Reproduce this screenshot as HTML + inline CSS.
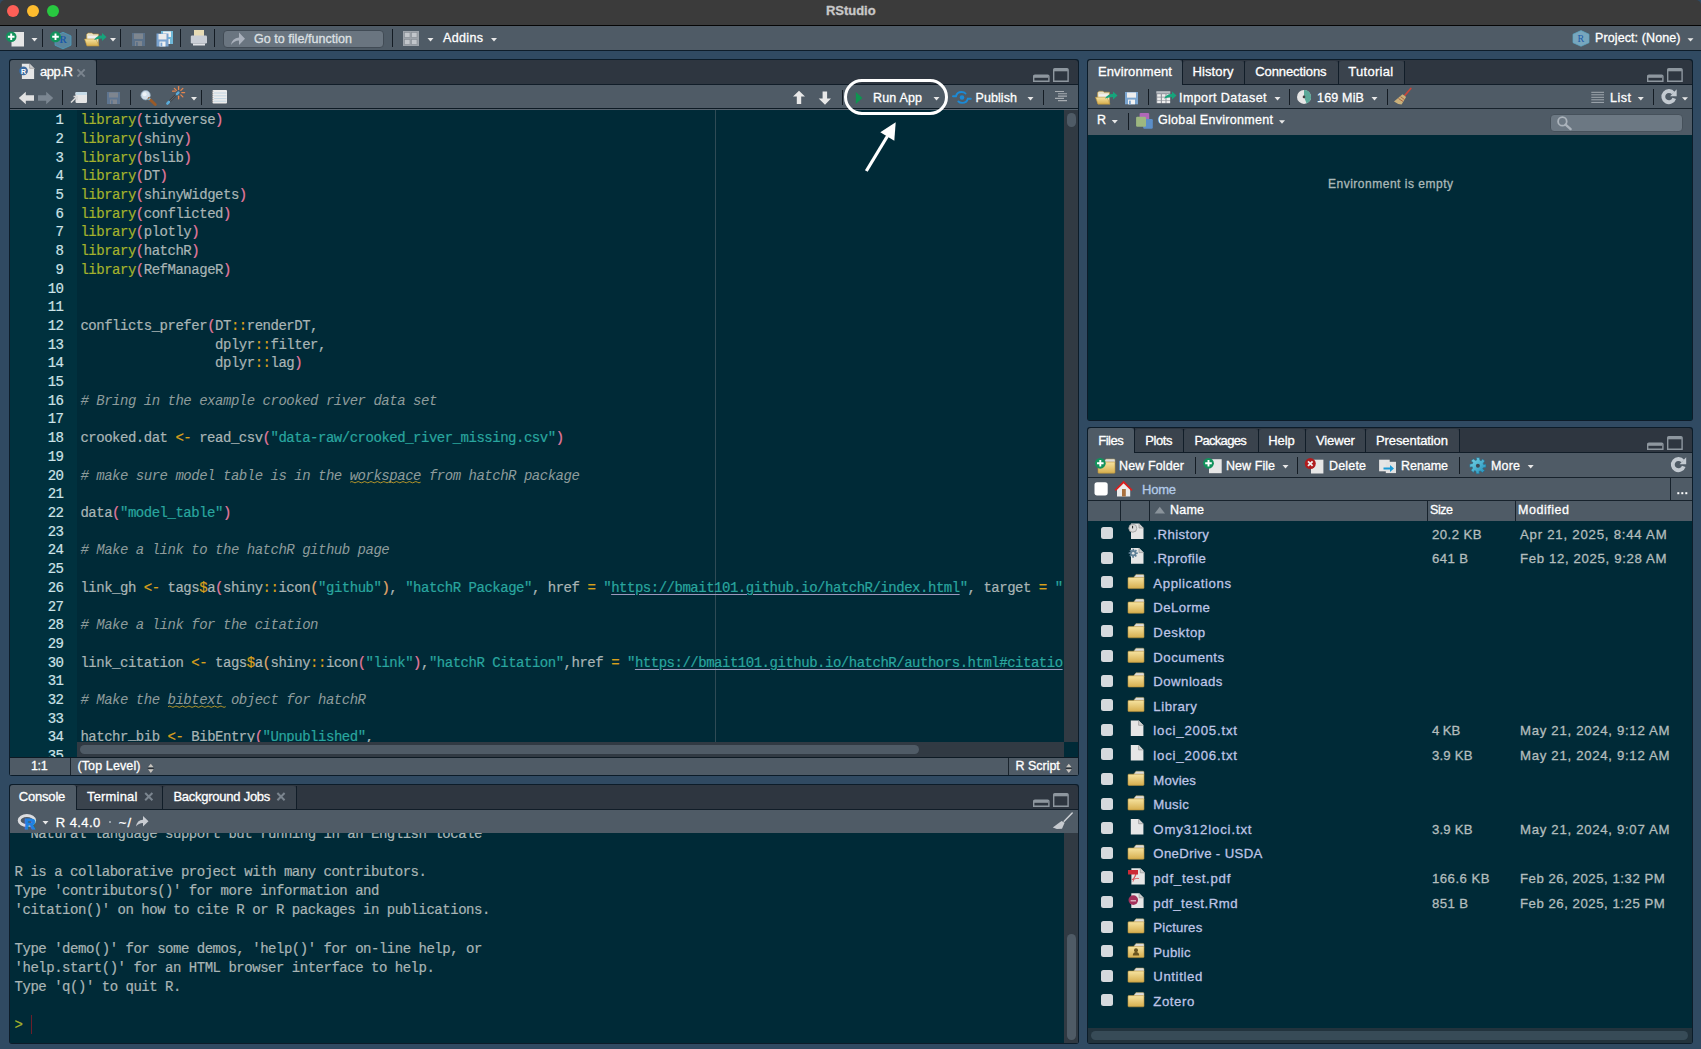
<!DOCTYPE html>
<html><head><meta charset="utf-8"><title>RStudio</title><style>*{box-sizing:border-box;margin:0;padding:0}
html,body{width:1701px;height:1049px;overflow:hidden}
body{background:#304a62;position:relative;font-family:"Liberation Sans",sans-serif}
.a{position:absolute}
.t{white-space:pre;-webkit-text-stroke:0.3px currentColor}
.cl{font-family:"Liberation Mono",monospace;font-size:14.0px;line-height:14.0px;letter-spacing:-0.481px;white-space:pre;color:#a9b5b5;-webkit-text-stroke:0.2px currentColor}
.ul{text-decoration:underline;text-decoration-color:#9c98bd;text-underline-offset:2px}
.sq{text-decoration:underline wavy #c9a227;text-decoration-thickness:1px;text-underline-offset:2px}
</style></head><body>
<div class="a" style="left:0px;top:0px;width:1701px;height:25px;background:#3b3b3b;border-radius:5px 5px 0 0"></div>
<div class="a" style="left:0px;top:25px;width:1701px;height:1px;background:#050505;"></div>
<div class="a" style="left:6.8px;top:4.7px;width:12.4px;height:12.4px;border-radius:50%;background:#fe5f57"></div>
<div class="a" style="left:26.8px;top:4.7px;width:12.4px;height:12.4px;border-radius:50%;background:#febc2e"></div>
<div class="a" style="left:46.8px;top:4.7px;width:12.4px;height:12.4px;border-radius:50%;background:#28c840"></div>
<div class="a t" style="left:826.00px;top:3.99px;font-size:13px;line-height:13px;color:#c8c8c8;font-family:'Liberation Sans',sans-serif;font-weight:700;letter-spacing:-0.033px;">RStudio</div>
<div class="a" style="left:0px;top:26px;width:1701px;height:24px;background:#4f5b66;"></div>
<div class="a" style="left:0px;top:50px;width:1701px;height:1px;background:#0e1d2a;"></div>
<!--ICONS_MAIN-->
<div class="a" style="left:222.5px;top:29.5px;width:161px;height:18.5px;background:#6a7580;border:1px solid #414b55;border-radius:4px;box-sizing:border-box"></div>
<div class="a t" style="left:254.00px;top:33.02px;font-size:12.5px;line-height:12.5px;color:#dde0e3;font-family:'Liberation Sans',sans-serif;letter-spacing:0.039px;">Go to file/function</div>
<div class="a t" style="left:443.00px;top:32.22px;font-size:12.5px;line-height:12.5px;color:#ffffff;font-family:'Liberation Sans',sans-serif;letter-spacing:0.360px;">Addins</div>
<div class="a t" style="left:1595.00px;top:32.42px;font-size:12.5px;line-height:12.5px;color:#ffffff;font-family:'Liberation Sans',sans-serif;letter-spacing:0.100px;">Project: (None)</div>
<div class="a" style="left:42px;top:29px;width:1px;height:18px;background:#141c24;"></div>
<div class="a" style="left:76px;top:29px;width:1px;height:18px;background:#141c24;"></div>
<div class="a" style="left:120px;top:29px;width:1px;height:18px;background:#141c24;"></div>
<div class="a" style="left:180px;top:29px;width:1px;height:18px;background:#141c24;"></div>
<div class="a" style="left:214px;top:29px;width:1px;height:18px;background:#141c24;"></div>
<div class="a" style="left:392px;top:29px;width:1px;height:18px;background:#141c24;"></div>
<div class="a" style="left:9px;top:59px;width:1070px;height:717px;background:#0c1c29;border-radius:3px"></div>
<div class="a" style="left:9px;top:784px;width:1070px;height:260px;background:#0c1c29;border-radius:3px"></div>
<div class="a" style="left:1087px;top:59px;width:606px;height:362px;background:#0c1c29;border-radius:3px"></div>
<div class="a" style="left:1087px;top:427px;width:606px;height:617px;background:#0c1c29;border-radius:3px"></div>
<div class="a" style="left:10px;top:60px;width:1068px;height:24px;background:#2e3640;border-radius:3px 3px 0 0"></div>
<div class="a" style="left:10px;top:60px;width:86px;height:25px;background:#4f5b66;border-radius:3px 3px 0 0"></div>
<div class="a" style="left:96px;top:60px;width:1px;height:24px;background:#111d28;"></div>
<div class="a" style="left:10px;top:84px;width:86px;height:0px;background:#4f5b66;"></div>
<div class="a" style="left:96px;top:84px;width:982px;height:1px;background:#111d28;"></div>
<div class="a" style="left:10px;top:85px;width:1068px;height:23px;background:#4f5b66;"></div>
<div class="a" style="left:10px;top:108px;width:1068px;height:1px;background:#0d1a24;"></div>
<div class="a" style="left:10px;top:109px;width:1068px;height:1px;background:#56626d;"></div>
<div class="a t" style="left:40.00px;top:65.19px;font-size:13px;line-height:13px;color:#ffffff;font-family:'Liberation Sans',sans-serif;letter-spacing:-0.425px;">app.R</div>
<div class="a t" style="left:873.00px;top:91.72px;font-size:12.5px;line-height:12.5px;color:#ffffff;font-family:'Liberation Sans',sans-serif;letter-spacing:0.167px;">Run App</div>
<div class="a t" style="left:975.50px;top:91.72px;font-size:12.5px;line-height:12.5px;color:#ffffff;font-family:'Liberation Sans',sans-serif;letter-spacing:0.083px;">Publish</div>
<div class="a" style="left:62px;top:90px;width:1px;height:15px;background:#141c24;"></div>
<div class="a" style="left:96px;top:90px;width:1px;height:15px;background:#141c24;"></div>
<div class="a" style="left:130px;top:90px;width:1px;height:15px;background:#141c24;"></div>
<div class="a" style="left:201px;top:90px;width:1px;height:15px;background:#141c24;"></div>
<div class="a" style="left:842px;top:90px;width:1px;height:15px;background:#141c24;"></div>
<div class="a" style="left:1043px;top:90px;width:1px;height:15px;background:#141c24;"></div>
<div class="a" style="left:10px;top:110px;width:1054px;height:648px;background:#002a37;"></div>
<div class="a" style="left:10px;top:110px;width:67px;height:648px;background:#00313e;"></div>
<div class="a" style="left:1064px;top:110px;width:14px;height:648px;background:#313a43;"></div>
<div class="a" style="left:1067px;top:113px;width:9px;height:14px;border-radius:5px;background:#4f5b66"></div>
<div class="a" style="left:10px;top:110px;width:67px;height:647px;overflow:hidden"><div class="a cl" style="top:3.17px;right:13.5px;color:#cde3e8;text-align:right">1</div><div class="a cl" style="top:21.88px;right:13.5px;color:#cde3e8;text-align:right">2</div><div class="a cl" style="top:40.59px;right:13.5px;color:#cde3e8;text-align:right">3</div><div class="a cl" style="top:59.29px;right:13.5px;color:#cde3e8;text-align:right">4</div><div class="a cl" style="top:78.00px;right:13.5px;color:#cde3e8;text-align:right">5</div><div class="a cl" style="top:96.70px;right:13.5px;color:#cde3e8;text-align:right">6</div><div class="a cl" style="top:115.41px;right:13.5px;color:#cde3e8;text-align:right">7</div><div class="a cl" style="top:134.12px;right:13.5px;color:#cde3e8;text-align:right">8</div><div class="a cl" style="top:152.82px;right:13.5px;color:#cde3e8;text-align:right">9</div><div class="a cl" style="top:171.53px;right:13.5px;color:#cde3e8;text-align:right">10</div><div class="a cl" style="top:190.23px;right:13.5px;color:#cde3e8;text-align:right">11</div><div class="a cl" style="top:208.94px;right:13.5px;color:#cde3e8;text-align:right">12</div><div class="a cl" style="top:227.65px;right:13.5px;color:#cde3e8;text-align:right">13</div><div class="a cl" style="top:246.35px;right:13.5px;color:#cde3e8;text-align:right">14</div><div class="a cl" style="top:265.06px;right:13.5px;color:#cde3e8;text-align:right">15</div><div class="a cl" style="top:283.76px;right:13.5px;color:#cde3e8;text-align:right">16</div><div class="a cl" style="top:302.47px;right:13.5px;color:#cde3e8;text-align:right">17</div><div class="a cl" style="top:321.18px;right:13.5px;color:#cde3e8;text-align:right">18</div><div class="a cl" style="top:339.88px;right:13.5px;color:#cde3e8;text-align:right">19</div><div class="a cl" style="top:358.59px;right:13.5px;color:#cde3e8;text-align:right">20</div><div class="a cl" style="top:377.29px;right:13.5px;color:#cde3e8;text-align:right">21</div><div class="a cl" style="top:396.00px;right:13.5px;color:#cde3e8;text-align:right">22</div><div class="a cl" style="top:414.71px;right:13.5px;color:#cde3e8;text-align:right">23</div><div class="a cl" style="top:433.41px;right:13.5px;color:#cde3e8;text-align:right">24</div><div class="a cl" style="top:452.12px;right:13.5px;color:#cde3e8;text-align:right">25</div><div class="a cl" style="top:470.82px;right:13.5px;color:#cde3e8;text-align:right">26</div><div class="a cl" style="top:489.53px;right:13.5px;color:#cde3e8;text-align:right">27</div><div class="a cl" style="top:508.24px;right:13.5px;color:#cde3e8;text-align:right">28</div><div class="a cl" style="top:526.94px;right:13.5px;color:#cde3e8;text-align:right">29</div><div class="a cl" style="top:545.65px;right:13.5px;color:#cde3e8;text-align:right">30</div><div class="a cl" style="top:564.35px;right:13.5px;color:#cde3e8;text-align:right">31</div><div class="a cl" style="top:583.06px;right:13.5px;color:#cde3e8;text-align:right">32</div><div class="a cl" style="top:601.77px;right:13.5px;color:#cde3e8;text-align:right">33</div><div class="a cl" style="top:620.47px;right:13.5px;color:#cde3e8;text-align:right">34</div><div class="a cl" style="top:639.18px;right:13.5px;color:#cde3e8;text-align:right">35</div></div><div class="a" style="left:77px;top:110px;width:987px;height:632px;overflow:hidden"><div class="a" style="left:638px;top:0px;width:1px;height:632px;background:#2f4b55"></div><div class="a cl" style="top:3.17px;left:3.40px"><span style="color:#a4b22c;">library</span><span style="color:#e67a9f;">(</span>tidyverse<span style="color:#e67a9f;">)</span></div><div class="a cl" style="top:21.88px;left:3.40px"><span style="color:#a4b22c;">library</span><span style="color:#e67a9f;">(</span>shiny<span style="color:#e67a9f;">)</span></div><div class="a cl" style="top:40.59px;left:3.40px"><span style="color:#a4b22c;">library</span><span style="color:#e67a9f;">(</span>bslib<span style="color:#e67a9f;">)</span></div><div class="a cl" style="top:59.29px;left:3.40px"><span style="color:#a4b22c;">library</span><span style="color:#e67a9f;">(</span>DT<span style="color:#e67a9f;">)</span></div><div class="a cl" style="top:78.00px;left:3.40px"><span style="color:#a4b22c;">library</span><span style="color:#e67a9f;">(</span>shinyWidgets<span style="color:#e67a9f;">)</span></div><div class="a cl" style="top:96.70px;left:3.40px"><span style="color:#a4b22c;">library</span><span style="color:#e67a9f;">(</span>conflicted<span style="color:#e67a9f;">)</span></div><div class="a cl" style="top:115.41px;left:3.40px"><span style="color:#a4b22c;">library</span><span style="color:#e67a9f;">(</span>plotly<span style="color:#e67a9f;">)</span></div><div class="a cl" style="top:134.12px;left:3.40px"><span style="color:#a4b22c;">library</span><span style="color:#e67a9f;">(</span>hatchR<span style="color:#e67a9f;">)</span></div><div class="a cl" style="top:152.82px;left:3.40px"><span style="color:#a4b22c;">library</span><span style="color:#e67a9f;">(</span>RefManageR<span style="color:#e67a9f;">)</span></div><div class="a cl" style="top:171.53px;left:3.40px"></div><div class="a cl" style="top:190.23px;left:3.40px"></div><div class="a cl" style="top:208.94px;left:3.40px">conflicts_prefer<span style="color:#e67a9f;">(</span>DT<span style="color:#d8a01c;">::</span>renderDT,</div><div class="a cl" style="top:227.65px;left:3.40px">                 dplyr<span style="color:#d8a01c;">::</span>filter,</div><div class="a cl" style="top:246.35px;left:3.40px">                 dplyr<span style="color:#d8a01c;">::</span>lag<span style="color:#e67a9f;">)</span></div><div class="a cl" style="top:265.06px;left:3.40px"></div><div class="a cl" style="top:283.76px;left:3.40px"><span style="color:#8e9c9c;font-style:italic;-webkit-text-stroke:0"># Bring in the example crooked river data set</span></div><div class="a cl" style="top:302.47px;left:3.40px"></div><div class="a cl" style="top:321.18px;left:3.40px">crooked.dat <span style="color:#d8a01c;">&lt;-</span> read_csv<span style="color:#e67a9f;">(</span><span style="color:#29a69f;">&quot;data-raw/crooked_river_missing.csv&quot;</span><span style="color:#e67a9f;">)</span></div><div class="a cl" style="top:339.88px;left:3.40px"></div><div class="a cl" style="top:358.59px;left:3.40px"><span style="color:#8e9c9c;font-style:italic;-webkit-text-stroke:0"># make sure model table is in the workspace from hatchR package</span></div><div class="a cl" style="top:377.29px;left:3.40px"></div><div class="a cl" style="top:396.00px;left:3.40px">data<span style="color:#e67a9f;">(</span><span style="color:#29a69f;">&quot;model_table&quot;</span><span style="color:#e67a9f;">)</span></div><div class="a cl" style="top:414.71px;left:3.40px"></div><div class="a cl" style="top:433.41px;left:3.40px"><span style="color:#8e9c9c;font-style:italic;-webkit-text-stroke:0"># Make a link to the hatchR github page</span></div><div class="a cl" style="top:452.12px;left:3.40px"></div><div class="a cl" style="top:470.82px;left:3.40px">link_gh <span style="color:#d8a01c;">&lt;-</span> tags<span style="color:#d8a01c;">$</span>a<span style="color:#e67a9f;">(</span>shiny<span style="color:#d8a01c;">::</span>icon<span style="color:#e3a76a;">(</span><span style="color:#29a69f;">&quot;github&quot;</span><span style="color:#e3a76a;">)</span>, <span style="color:#29a69f;">&quot;hatchR Package&quot;</span>, href <span style="color:#d8a01c;">=</span> <span style="color:#29a69f;">&quot;</span><span style="color:#29a69f" class="ul">https://bmait101.github.io/hatchR/index.html</span><span style="color:#29a69f;">&quot;</span>, target <span style="color:#d8a01c;">=</span> <span style="color:#29a69f;">&quot;</span></div><div class="a cl" style="top:489.53px;left:3.40px"></div><div class="a cl" style="top:508.24px;left:3.40px"><span style="color:#8e9c9c;font-style:italic;-webkit-text-stroke:0"># Make a link for the citation</span></div><div class="a cl" style="top:526.94px;left:3.40px"></div><div class="a cl" style="top:545.65px;left:3.40px">link_citation <span style="color:#d8a01c;">&lt;-</span> tags<span style="color:#d8a01c;">$</span>a<span style="color:#e3a76a;">(</span>shiny<span style="color:#d8a01c;">::</span>icon<span style="color:#e67a9f;">(</span><span style="color:#29a69f;">&quot;link&quot;</span><span style="color:#e67a9f;">)</span>,<span style="color:#29a69f;">&quot;hatchR Citation&quot;</span>,href <span style="color:#d8a01c;">=</span> <span style="color:#29a69f;">&quot;</span><span style="color:#29a69f" class="ul">https://bmait101.github.io/hatchR/authors.html#citatio</span></div><div class="a cl" style="top:564.35px;left:3.40px"></div><div class="a cl" style="top:583.06px;left:3.40px"><span style="color:#8e9c9c;font-style:italic;-webkit-text-stroke:0"># Make the bibtext object for hatchR</span></div><div class="a cl" style="top:601.77px;left:3.40px"></div><div class="a cl" style="top:620.47px;left:3.40px">hatchr<span style="position:relative;top:-2px">_</span>bib <span style="color:#d8a01c;">&lt;-</span> BibEntry<span style="color:#e67a9f;">(</span><span style="color:#29a69f;">&quot;Unpublished&quot;</span>,</div><div class="a cl" style="top:639.18px;left:3.40px"></div></div>
<div class="a" style="left:77px;top:742px;width:987px;height:15px;background:#313a43;"></div>
<div class="a" style="left:80px;top:745px;width:839px;height:9px;border-radius:5px;background:#4f5b66"></div>
<div class="a" style="left:1064px;top:742px;width:14px;height:15px;background:#002a37;"></div>
<div class="a" style="left:10px;top:757px;width:1068px;height:1px;background:#0d1a24;"></div>
<div class="a" style="left:10px;top:758px;width:1068px;height:17px;background:#4f5b66;"></div>
<div class="a" style="left:70px;top:758px;width:1px;height:17px;background:#1a242d;"></div>
<div class="a" style="left:1008px;top:758px;width:1px;height:17px;background:#1a242d;"></div>
<div class="a t" style="left:30.90px;top:760.22px;font-size:12.5px;line-height:12.5px;color:#ffffff;font-family:'Liberation Sans',sans-serif;letter-spacing:-0.250px;">1:1</div>
<div class="a t" style="left:77.40px;top:760.22px;font-size:12.5px;line-height:12.5px;color:#ffffff;font-family:'Liberation Sans',sans-serif;letter-spacing:0.130px;">(Top Level)</div>
<div class="a t" style="left:1015.60px;top:760.42px;font-size:12.5px;line-height:12.5px;color:#ffffff;font-family:'Liberation Sans',sans-serif;letter-spacing:-0.029px;">R Script</div>
<div class="a" style="left:10px;top:785px;width:1068px;height:24px;background:#2e3640;border-radius:3px 3px 0 0"></div>
<div class="a" style="left:10px;top:785px;width:66px;height:25px;background:#4f5b66;border-radius:3px 3px 0 0"></div>
<div class="a" style="left:77px;top:786px;width:85px;height:23px;background:#3a434d;border-radius:3px 3px 0 0"></div>
<div class="a" style="left:163px;top:786px;width:133px;height:23px;background:#3a434d;border-radius:3px 3px 0 0"></div>
<div class="a" style="left:76px;top:786px;width:1px;height:24px;background:#111d28;"></div>
<div class="a" style="left:162px;top:786px;width:1px;height:23px;background:#111d28;"></div>
<div class="a" style="left:296px;top:786px;width:1px;height:23px;background:#111d28;"></div>
<div class="a" style="left:76px;top:809px;width:1002px;height:1px;background:#111d28;"></div>
<div class="a" style="left:10px;top:810px;width:1068px;height:23px;background:#4f5b66;"></div>
<div class="a" style="left:10px;top:833px;width:1054px;height:210px;background:#002a37;"></div>
<div class="a" style="left:1064px;top:833px;width:14px;height:210px;background:#313a43;"></div>
<div class="a" style="left:1066.5px;top:933.5px;width:9.5px;height:106.5px;border-radius:5px;background:#4f5b66"></div>
<div class="a t" style="left:18.80px;top:790.19px;font-size:13px;line-height:13px;color:#ffffff;font-family:'Liberation Sans',sans-serif;letter-spacing:-0.200px;">Console</div>
<div class="a t" style="left:87.00px;top:790.19px;font-size:13px;line-height:13px;color:#ffffff;font-family:'Liberation Sans',sans-serif;letter-spacing:0.171px;">Terminal</div>
<div class="a t" style="left:173.40px;top:790.19px;font-size:13px;line-height:13px;color:#ffffff;font-family:'Liberation Sans',sans-serif;letter-spacing:-0.250px;">Background Jobs</div>
<div class="a t" style="left:55.80px;top:815.69px;font-size:13px;line-height:13px;color:#ffffff;font-family:'Liberation Sans',sans-serif;letter-spacing:0.417px;">R 4.4.0</div>
<div class="a t" style="left:118.80px;top:815.69px;font-size:13px;line-height:13px;color:#ffffff;font-family:'Liberation Sans',sans-serif;letter-spacing:1.000px;">~/</div>
<div class="a" style="left:108.5px;top:821px;width:2px;height:2px;background:#9aa4ad"></div>
<div class="a" style="left:10px;top:833px;width:1054px;height:210px;overflow:hidden"><div class="a cl" style="left:4.60px;top:-6.33px;color:#a9b5b5">  Natural language support but running in an English locale</div><div class="a cl" style="left:4.60px;top:12.82px;color:#a9b5b5"></div><div class="a cl" style="left:4.60px;top:31.97px;color:#a9b5b5">R is a collaborative project with many contributors.</div><div class="a cl" style="left:4.60px;top:51.12px;color:#a9b5b5">Type &#x27;contributors()&#x27; for more information and</div><div class="a cl" style="left:4.60px;top:70.27px;color:#a9b5b5">&#x27;citation()&#x27; on how to cite R or R packages in publications.</div><div class="a cl" style="left:4.60px;top:89.42px;color:#a9b5b5"></div><div class="a cl" style="left:4.60px;top:108.57px;color:#a9b5b5">Type &#x27;demo()&#x27; for some demos, &#x27;help()&#x27; for on-line help, or</div><div class="a cl" style="left:4.60px;top:127.72px;color:#a9b5b5">&#x27;help.start()&#x27; for an HTML browser interface to help.</div><div class="a cl" style="left:4.60px;top:146.87px;color:#a9b5b5">Type &#x27;q()&#x27; to quit R.</div><div class="a cl" style="left:4.60px;top:166.02px;color:#a9b5b5"></div><div class="a cl" style="left:4.60px;top:185.17px;color:#a4b22c">&gt;</div><div class="a" style="left:20.5px;top:182px;width:1px;height:19px;background:#6b1f2a"></div></div>
<div class="a" style="left:1088px;top:60px;width:604px;height:24px;background:#2e3640;border-radius:3px 3px 0 0"></div>
<div class="a" style="left:1088px;top:60px;width:94px;height:25px;background:#4f5b66;border-radius:3px 3px 0 0"></div>
<div class="a" style="left:1183px;top:61px;width:61px;height:23px;background:#3a434d;border-radius:3px 3px 0 0"></div>
<div class="a" style="left:1244px;top:61px;width:1px;height:23px;background:#111d28;"></div>
<div class="a" style="left:1245px;top:61px;width:93px;height:23px;background:#3a434d;border-radius:3px 3px 0 0"></div>
<div class="a" style="left:1338px;top:61px;width:1px;height:23px;background:#111d28;"></div>
<div class="a" style="left:1339px;top:61px;width:65px;height:23px;background:#3a434d;border-radius:3px 3px 0 0"></div>
<div class="a" style="left:1404px;top:61px;width:1px;height:23px;background:#111d28;"></div>
<div class="a" style="left:1182px;top:60px;width:1px;height:25px;background:#111d28;"></div>
<div class="a" style="left:1182px;top:84px;width:510px;height:1px;background:#111d28;"></div>
<div class="a" style="left:1088px;top:85px;width:604px;height:23px;background:#4f5b66;"></div>
<div class="a" style="left:1088px;top:108px;width:604px;height:1px;background:#17222c;"></div>
<div class="a" style="left:1088px;top:109px;width:604px;height:26px;background:#4f5b66;"></div>
<div class="a" style="left:1088px;top:135px;width:604px;height:285px;background:#002a37;"></div>
<div class="a t" style="left:1098.00px;top:65.19px;font-size:13px;line-height:13px;color:#ffffff;font-family:'Liberation Sans',sans-serif;letter-spacing:0.100px;">Environment</div>
<div class="a t" style="left:1192.60px;top:65.19px;font-size:13px;line-height:13px;color:#ffffff;font-family:'Liberation Sans',sans-serif;letter-spacing:0.083px;">History</div>
<div class="a t" style="left:1255.20px;top:65.19px;font-size:13px;line-height:13px;color:#ffffff;font-family:'Liberation Sans',sans-serif;letter-spacing:-0.090px;">Connections</div>
<div class="a t" style="left:1348.20px;top:65.19px;font-size:13px;line-height:13px;color:#ffffff;font-family:'Liberation Sans',sans-serif;letter-spacing:0.314px;">Tutorial</div>
<div class="a t" style="left:1179.00px;top:91.62px;font-size:12.5px;line-height:12.5px;color:#ffffff;font-family:'Liberation Sans',sans-serif;letter-spacing:0.423px;">Import Dataset</div>
<div class="a t" style="left:1317.00px;top:91.62px;font-size:12.5px;line-height:12.5px;color:#ffffff;font-family:'Liberation Sans',sans-serif;letter-spacing:0.183px;">169 MiB</div>
<div class="a t" style="left:1610.00px;top:91.62px;font-size:12.5px;line-height:12.5px;color:#ffffff;font-family:'Liberation Sans',sans-serif;letter-spacing:0.500px;">List</div>
<div class="a t" style="left:1097.00px;top:114.12px;font-size:12.5px;line-height:12.5px;color:#ffffff;font-family:'Liberation Sans',sans-serif;">R</div>
<div class="a t" style="left:1158.00px;top:114.12px;font-size:12.5px;line-height:12.5px;color:#ffffff;font-family:'Liberation Sans',sans-serif;letter-spacing:0.306px;">Global Environment</div>
<div class="a" style="left:1128px;top:113px;width:1px;height:17px;background:#141c24;"></div>
<div class="a" style="left:1148px;top:89px;width:1px;height:16px;background:#141c24;"></div>
<div class="a" style="left:1289px;top:89px;width:1px;height:16px;background:#141c24;"></div>
<div class="a" style="left:1387px;top:89px;width:1px;height:16px;background:#141c24;"></div>
<div class="a" style="left:1653px;top:89px;width:1px;height:16px;background:#141c24;"></div>
<div class="a" style="left:1549.5px;top:113.5px;width:133px;height:18px;border-radius:4px;background:#6c7883;border:1px solid #46515b;box-sizing:border-box"></div>
<div class="a t" style="left:1328.00px;top:177.74px;font-size:12px;line-height:12px;color:#a9b8b8;font-family:'Liberation Sans',sans-serif;letter-spacing:0.505px;">Environment is empty</div>
<div class="a" style="left:1088px;top:428px;width:604px;height:24px;background:#2e3640;border-radius:3px 3px 0 0"></div>
<div class="a" style="left:1088px;top:428px;width:46px;height:25px;background:#4f5b66;border-radius:3px 3px 0 0"></div>
<div class="a" style="left:1135px;top:429px;width:48px;height:23px;background:#3a434d;border-radius:3px 3px 0 0"></div>
<div class="a" style="left:1183px;top:429px;width:1px;height:23px;background:#111d28;"></div>
<div class="a" style="left:1184px;top:429px;width:74px;height:23px;background:#3a434d;border-radius:3px 3px 0 0"></div>
<div class="a" style="left:1258px;top:429px;width:1px;height:23px;background:#111d28;"></div>
<div class="a" style="left:1259px;top:429px;width:46px;height:23px;background:#3a434d;border-radius:3px 3px 0 0"></div>
<div class="a" style="left:1305px;top:429px;width:1px;height:23px;background:#111d28;"></div>
<div class="a" style="left:1306px;top:429px;width:59px;height:23px;background:#3a434d;border-radius:3px 3px 0 0"></div>
<div class="a" style="left:1365px;top:429px;width:1px;height:23px;background:#111d28;"></div>
<div class="a" style="left:1366px;top:429px;width:93px;height:23px;background:#3a434d;border-radius:3px 3px 0 0"></div>
<div class="a" style="left:1459px;top:429px;width:1px;height:23px;background:#111d28;"></div>
<div class="a" style="left:1134px;top:428px;width:1px;height:25px;background:#111d28;"></div>
<div class="a" style="left:1134px;top:452px;width:558px;height:1px;background:#111d28;"></div>
<div class="a" style="left:1088px;top:453px;width:604px;height:24px;background:#4f5b66;"></div>
<div class="a" style="left:1088px;top:477px;width:604px;height:1px;background:#17222c;"></div>
<div class="a" style="left:1088px;top:478px;width:604px;height:22px;background:#4f5b66;"></div>
<div class="a" style="left:1670px;top:478px;width:1px;height:22px;background:#17222c;"></div>
<div class="a" style="left:1088px;top:500px;width:604px;height:1px;background:#17222c;"></div>
<div class="a" style="left:1088px;top:501px;width:604px;height:20px;background:#4f5b66;"></div>
<div class="a" style="left:1120px;top:501px;width:1px;height:20px;background:#17222c;"></div>
<div class="a" style="left:1149px;top:501px;width:1px;height:20px;background:#17222c;"></div>
<div class="a" style="left:1427px;top:501px;width:1px;height:20px;background:#17222c;"></div>
<div class="a" style="left:1515px;top:501px;width:1px;height:20px;background:#17222c;"></div>
<div class="a" style="left:1088px;top:521px;width:604px;height:507px;background:#002a37;"></div>
<div class="a" style="left:1088px;top:1028px;width:604px;height:15px;background:#22333d;"></div>
<div class="a" style="left:1091px;top:1031px;width:597px;height:9px;border-radius:5px;background:#374b57"></div>
<div class="a t" style="left:1098.20px;top:433.69px;font-size:13px;line-height:13px;color:#ffffff;font-family:'Liberation Sans',sans-serif;letter-spacing:-0.500px;">Files</div>
<div class="a t" style="left:1145.20px;top:433.69px;font-size:13px;line-height:13px;color:#ffffff;font-family:'Liberation Sans',sans-serif;letter-spacing:-0.400px;">Plots</div>
<div class="a t" style="left:1194.40px;top:433.69px;font-size:13px;line-height:13px;color:#ffffff;font-family:'Liberation Sans',sans-serif;letter-spacing:-0.671px;">Packages</div>
<div class="a t" style="left:1268.30px;top:433.69px;font-size:13px;line-height:13px;color:#ffffff;font-family:'Liberation Sans',sans-serif;letter-spacing:-0.100px;">Help</div>
<div class="a t" style="left:1315.90px;top:433.69px;font-size:13px;line-height:13px;color:#ffffff;font-family:'Liberation Sans',sans-serif;letter-spacing:-0.100px;">Viewer</div>
<div class="a t" style="left:1376.00px;top:433.69px;font-size:13px;line-height:13px;color:#ffffff;font-family:'Liberation Sans',sans-serif;letter-spacing:-0.091px;">Presentation</div>
<div class="a t" style="left:1119.00px;top:459.52px;font-size:12.5px;line-height:12.5px;color:#ffffff;font-family:'Liberation Sans',sans-serif;letter-spacing:0.122px;">New Folder</div>
<div class="a t" style="left:1226.00px;top:459.52px;font-size:12.5px;line-height:12.5px;color:#ffffff;font-family:'Liberation Sans',sans-serif;letter-spacing:0.057px;">New File</div>
<div class="a t" style="left:1329.00px;top:459.52px;font-size:12.5px;line-height:12.5px;color:#ffffff;font-family:'Liberation Sans',sans-serif;letter-spacing:0.180px;">Delete</div>
<div class="a t" style="left:1401.00px;top:459.52px;font-size:12.5px;line-height:12.5px;color:#ffffff;font-family:'Liberation Sans',sans-serif;letter-spacing:-0.040px;">Rename</div>
<div class="a t" style="left:1491.00px;top:459.52px;font-size:12.5px;line-height:12.5px;color:#ffffff;font-family:'Liberation Sans',sans-serif;letter-spacing:0.167px;">More</div>
<div class="a" style="left:1195px;top:457px;width:1px;height:17px;background:#141c24;"></div>
<div class="a" style="left:1297px;top:457px;width:1px;height:17px;background:#141c24;"></div>
<div class="a" style="left:1459px;top:457px;width:1px;height:17px;background:#141c24;"></div>
<div class="a t" style="left:1142.00px;top:483.19px;font-size:13px;line-height:13px;color:#b3cbe8;font-family:'Liberation Sans',sans-serif;letter-spacing:-0.233px;">Home</div>
<div class="a t" style="left:1170.00px;top:504.42px;font-size:12.5px;line-height:12.5px;color:#ffffff;font-family:'Liberation Sans',sans-serif;letter-spacing:0.233px;">Name</div>
<div class="a t" style="left:1430.00px;top:504.42px;font-size:12.5px;line-height:12.5px;color:#ffffff;font-family:'Liberation Sans',sans-serif;letter-spacing:-0.433px;">Size</div>
<div class="a t" style="left:1518.00px;top:504.42px;font-size:12.5px;line-height:12.5px;color:#ffffff;font-family:'Liberation Sans',sans-serif;letter-spacing:0.543px;">Modified</div>
<div class="a" style="left:1101px;top:527.00px;width:12px;height:12px;border-radius:2.5px;background:#d5d9dd"></div>
<div class="a t" style="left:1153.30px;top:527.62px;font-size:13.2px;line-height:13.2px;color:#bec4e6;font-family:'Liberation Sans',sans-serif;letter-spacing:0.450px;">.Rhistory</div>
<div class="a t" style="left:1432.00px;top:527.62px;font-size:13.2px;line-height:13.2px;color:#b3bdbd;font-family:'Liberation Sans',sans-serif;letter-spacing:0.433px;">20.2 KB</div>
<div class="a t" style="left:1520.00px;top:527.62px;font-size:13.2px;line-height:13.2px;color:#b3bdbd;font-family:'Liberation Sans',sans-serif;letter-spacing:0.770px;">Apr 21, 2025, 8:44 AM</div>
<div class="a" style="left:1101px;top:551.60px;width:12px;height:12px;border-radius:2.5px;background:#d5d9dd"></div>
<div class="a t" style="left:1153.30px;top:552.22px;font-size:13.2px;line-height:13.2px;color:#bec4e6;font-family:'Liberation Sans',sans-serif;letter-spacing:0.438px;">.Rprofile</div>
<div class="a t" style="left:1432.00px;top:552.22px;font-size:13.2px;line-height:13.2px;color:#b3bdbd;font-family:'Liberation Sans',sans-serif;letter-spacing:0.375px;">641 B</div>
<div class="a t" style="left:1520.00px;top:552.22px;font-size:13.2px;line-height:13.2px;color:#b3bdbd;font-family:'Liberation Sans',sans-serif;letter-spacing:0.655px;">Feb 12, 2025, 9:28 AM</div>
<div class="a" style="left:1101px;top:576.20px;width:12px;height:12px;border-radius:2.5px;background:#d5d9dd"></div>
<div class="a t" style="left:1153.30px;top:576.82px;font-size:13.2px;line-height:13.2px;color:#bec4e6;font-family:'Liberation Sans',sans-serif;letter-spacing:0.600px;">Applications</div>
<div class="a" style="left:1101px;top:600.80px;width:12px;height:12px;border-radius:2.5px;background:#d5d9dd"></div>
<div class="a t" style="left:1153.30px;top:601.42px;font-size:13.2px;line-height:13.2px;color:#bec4e6;font-family:'Liberation Sans',sans-serif;letter-spacing:0.400px;">DeLorme</div>
<div class="a" style="left:1101px;top:625.40px;width:12px;height:12px;border-radius:2.5px;background:#d5d9dd"></div>
<div class="a t" style="left:1153.30px;top:626.02px;font-size:13.2px;line-height:13.2px;color:#bec4e6;font-family:'Liberation Sans',sans-serif;letter-spacing:0.583px;">Desktop</div>
<div class="a" style="left:1101px;top:650.00px;width:12px;height:12px;border-radius:2.5px;background:#d5d9dd"></div>
<div class="a t" style="left:1153.30px;top:650.62px;font-size:13.2px;line-height:13.2px;color:#bec4e6;font-family:'Liberation Sans',sans-serif;letter-spacing:0.513px;">Documents</div>
<div class="a" style="left:1101px;top:674.60px;width:12px;height:12px;border-radius:2.5px;background:#d5d9dd"></div>
<div class="a t" style="left:1153.30px;top:675.22px;font-size:13.2px;line-height:13.2px;color:#bec4e6;font-family:'Liberation Sans',sans-serif;letter-spacing:0.475px;">Downloads</div>
<div class="a" style="left:1101px;top:699.20px;width:12px;height:12px;border-radius:2.5px;background:#d5d9dd"></div>
<div class="a t" style="left:1153.30px;top:699.82px;font-size:13.2px;line-height:13.2px;color:#bec4e6;font-family:'Liberation Sans',sans-serif;letter-spacing:0.533px;">Library</div>
<div class="a" style="left:1101px;top:723.80px;width:12px;height:12px;border-radius:2.5px;background:#d5d9dd"></div>
<div class="a t" style="left:1153.30px;top:724.42px;font-size:13.2px;line-height:13.2px;color:#bec4e6;font-family:'Liberation Sans',sans-serif;letter-spacing:0.800px;">loci_2005.txt</div>
<div class="a t" style="left:1432.00px;top:724.42px;font-size:13.2px;line-height:13.2px;color:#b3bdbd;font-family:'Liberation Sans',sans-serif;letter-spacing:-0.067px;">4 KB</div>
<div class="a t" style="left:1520.00px;top:724.42px;font-size:13.2px;line-height:13.2px;color:#b3bdbd;font-family:'Liberation Sans',sans-serif;letter-spacing:0.695px;">May 21, 2024, 9:12 AM</div>
<div class="a" style="left:1101px;top:748.40px;width:12px;height:12px;border-radius:2.5px;background:#d5d9dd"></div>
<div class="a t" style="left:1153.30px;top:749.02px;font-size:13.2px;line-height:13.2px;color:#bec4e6;font-family:'Liberation Sans',sans-serif;letter-spacing:0.800px;">loci_2006.txt</div>
<div class="a t" style="left:1432.00px;top:749.02px;font-size:13.2px;line-height:13.2px;color:#b3bdbd;font-family:'Liberation Sans',sans-serif;letter-spacing:0.180px;">3.9 KB</div>
<div class="a t" style="left:1520.00px;top:749.02px;font-size:13.2px;line-height:13.2px;color:#b3bdbd;font-family:'Liberation Sans',sans-serif;letter-spacing:0.695px;">May 21, 2024, 9:12 AM</div>
<div class="a" style="left:1101px;top:773.00px;width:12px;height:12px;border-radius:2.5px;background:#d5d9dd"></div>
<div class="a t" style="left:1153.30px;top:773.62px;font-size:13.2px;line-height:13.2px;color:#bec4e6;font-family:'Liberation Sans',sans-serif;letter-spacing:0.180px;">Movies</div>
<div class="a" style="left:1101px;top:797.60px;width:12px;height:12px;border-radius:2.5px;background:#d5d9dd"></div>
<div class="a t" style="left:1153.30px;top:798.22px;font-size:13.2px;line-height:13.2px;color:#bec4e6;font-family:'Liberation Sans',sans-serif;letter-spacing:0.250px;">Music</div>
<div class="a" style="left:1101px;top:822.20px;width:12px;height:12px;border-radius:2.5px;background:#d5d9dd"></div>
<div class="a t" style="left:1153.30px;top:822.82px;font-size:13.2px;line-height:13.2px;color:#bec4e6;font-family:'Liberation Sans',sans-serif;letter-spacing:0.846px;">Omy312loci.txt</div>
<div class="a t" style="left:1432.00px;top:822.82px;font-size:13.2px;line-height:13.2px;color:#b3bdbd;font-family:'Liberation Sans',sans-serif;letter-spacing:0.180px;">3.9 KB</div>
<div class="a t" style="left:1520.00px;top:822.82px;font-size:13.2px;line-height:13.2px;color:#b3bdbd;font-family:'Liberation Sans',sans-serif;letter-spacing:0.695px;">May 21, 2024, 9:07 AM</div>
<div class="a" style="left:1101px;top:846.80px;width:12px;height:12px;border-radius:2.5px;background:#d5d9dd"></div>
<div class="a t" style="left:1153.30px;top:847.42px;font-size:13.2px;line-height:13.2px;color:#bec4e6;font-family:'Liberation Sans',sans-serif;letter-spacing:0.357px;">OneDrive - USDA</div>
<div class="a" style="left:1101px;top:871.40px;width:12px;height:12px;border-radius:2.5px;background:#d5d9dd"></div>
<div class="a t" style="left:1153.30px;top:872.02px;font-size:13.2px;line-height:13.2px;color:#bec4e6;font-family:'Liberation Sans',sans-serif;letter-spacing:0.736px;">pdf_test.pdf</div>
<div class="a t" style="left:1432.00px;top:872.02px;font-size:13.2px;line-height:13.2px;color:#b3bdbd;font-family:'Liberation Sans',sans-serif;letter-spacing:0.471px;">166.6 KB</div>
<div class="a t" style="left:1520.00px;top:872.02px;font-size:13.2px;line-height:13.2px;color:#b3bdbd;font-family:'Liberation Sans',sans-serif;letter-spacing:0.530px;">Feb 26, 2025, 1:32 PM</div>
<div class="a" style="left:1101px;top:896.00px;width:12px;height:12px;border-radius:2.5px;background:#d5d9dd"></div>
<div class="a t" style="left:1153.30px;top:896.62px;font-size:13.2px;line-height:13.2px;color:#bec4e6;font-family:'Liberation Sans',sans-serif;letter-spacing:0.536px;">pdf_test.Rmd</div>
<div class="a t" style="left:1432.00px;top:896.62px;font-size:13.2px;line-height:13.2px;color:#b3bdbd;font-family:'Liberation Sans',sans-serif;letter-spacing:0.375px;">851 B</div>
<div class="a t" style="left:1520.00px;top:896.62px;font-size:13.2px;line-height:13.2px;color:#b3bdbd;font-family:'Liberation Sans',sans-serif;letter-spacing:0.530px;">Feb 26, 2025, 1:25 PM</div>
<div class="a" style="left:1101px;top:920.60px;width:12px;height:12px;border-radius:2.5px;background:#d5d9dd"></div>
<div class="a t" style="left:1153.30px;top:921.22px;font-size:13.2px;line-height:13.2px;color:#bec4e6;font-family:'Liberation Sans',sans-serif;letter-spacing:0.186px;">Pictures</div>
<div class="a" style="left:1101px;top:945.20px;width:12px;height:12px;border-radius:2.5px;background:#d5d9dd"></div>
<div class="a t" style="left:1153.30px;top:945.82px;font-size:13.2px;line-height:13.2px;color:#bec4e6;font-family:'Liberation Sans',sans-serif;letter-spacing:0.260px;">Public</div>
<div class="a" style="left:1101px;top:969.80px;width:12px;height:12px;border-radius:2.5px;background:#d5d9dd"></div>
<div class="a t" style="left:1153.30px;top:970.42px;font-size:13.2px;line-height:13.2px;color:#bec4e6;font-family:'Liberation Sans',sans-serif;letter-spacing:0.600px;">Untitled</div>
<div class="a" style="left:1101px;top:994.40px;width:12px;height:12px;border-radius:2.5px;background:#d5d9dd"></div>
<div class="a t" style="left:1153.30px;top:995.02px;font-size:13.2px;line-height:13.2px;color:#bec4e6;font-family:'Liberation Sans',sans-serif;letter-spacing:0.580px;">Zotero</div>
<svg class="a" style="left:0;top:0" width="1701" height="1049" viewBox="0 0 1701 1049"><defs><linearGradient id="fg" x1="0" y1="0" x2="0" y2="1"><stop offset="0" stop-color="#f6e3a0"/><stop offset="1" stop-color="#d6ae4e"/></linearGradient><linearGradient id="gear" x1="0" y1="0" x2="1" y2="1"><stop offset="0" stop-color="#7ad8e8"/><stop offset="1" stop-color="#1f8cb8"/></linearGradient></defs><rect x="11.5" y="32" width="12.5" height="14.5" fill="#e6e6e6"/><circle cx="11.2" cy="36.8" r="5.3" fill="#12925c"/><path d="M7.8999999999999995 36.8h6.6M11.2 33.5v6.6" stroke="#fff" stroke-width="1.9"/><path d="M31.5 38h6l-3 3.4z" fill="#e8e8e8"/><path d="M63 32.3l8 3.6v9.3l-8 3.6-8-3.6v-9.3z" fill="#5f93b0" fill-opacity="0.75" stroke="#4aa0c0" stroke-width="0.8"/><text x="59.6" y="43.2" font-family="Liberation Serif" font-size="10" fill="#1b5aa8" font-weight="bold">R</text><circle cx="55.5" cy="36.8" r="5.5" fill="#12925c"/><path d="M52.2 36.8h6.6M55.5 33.5v6.6" stroke="#fff" stroke-width="1.9"/><path d="M86.5 34.5l1.5-1.5h4l1 1h5.5v11h-12z" fill="#e8e2c8" stroke="#b8923a" stroke-width="0.6"/><path d="M88.0 36h9v8h-9z" fill="#f0f0f0"/><path d="M84.5 39h11.5l3 7h-12z" fill="url(#fg)" stroke="#b8923a" stroke-width="0.6"/><g transform="translate(94,33.5) scale(1.0)"><path d="M0 6.5q3-5 8-4.5v-2.5l4.5 4-4.5 4v-2.5q-4 0-8 1.5z" fill="#16a47c"/></g><path d="M110 38h6l-3 3.4z" fill="#e8e8e8"/><rect x="132" y="33" width="13" height="13" fill="#5b7189"/><rect x="134" y="33.5" width="9" height="5.46" fill="#7e868f"/><rect x="135" y="41.06" width="7" height="4.94" fill="#7e868f"/><rect x="136" y="42.1" width="1.8" height="3.9" fill="#5b7189"/><rect x="161" y="31" width="12" height="13" fill="#6fb8d8"/><rect x="163" y="31.5" width="8" height="5.46" fill="#f0f0f0"/><rect x="164" y="39.06" width="6" height="4.94" fill="#f0f0f0"/><rect x="165" y="40.1" width="1.8" height="3.9" fill="#6fb8d8"/><rect x="156.5" y="33.5" width="12" height="13" fill="#7aa3d0"/><rect x="158.5" y="34.0" width="8" height="5.46" fill="#ececec"/><rect x="159.5" y="41.56" width="6" height="4.94" fill="#f2f2f2"/><rect x="160.5" y="42.6" width="1.8" height="3.9" fill="#7aa3d0"/><rect x="194" y="30" width="10" height="8" fill="#e6dbb6"/><rect x="190.8" y="35.5" width="16.2" height="8" rx="1.2" fill="#c9ced6"/><rect x="193" y="43.5" width="12" height="2" fill="#dfe2e6"/><g transform="translate(231,32.5)"><path d="M0 12.5q1-7 8-7.5v-5l6 6.3-6 6.2v-4.5q-5 0-8 4.5z" fill="#aab1bc"/></g><rect x="403" y="31" width="16" height="15" fill="#9ea4ab"/><rect x="404.5" y="32.5" width="5.5" height="5" fill="#c2c6cb" stroke="#868c93" stroke-width="0.6"/><rect x="404.5" y="39.5" width="5.5" height="5" fill="#c2c6cb" stroke="#868c93" stroke-width="0.6"/><rect x="411.5" y="32.5" width="5.5" height="5" fill="#c2c6cb" stroke="#868c93" stroke-width="0.6"/><rect x="411.5" y="39.5" width="5.5" height="5" fill="#c2c6cb" stroke="#868c93" stroke-width="0.6"/><path d="M427.5 38h6l-3 3.4z" fill="#e8e8e8"/><path d="M491 38h6l-3 3.4z" fill="#e8e8e8"/><path d="M1581 30.6l8 3.6v8.5l-8 3.6-8-3.6v-8.5z" fill="#7fb4cc" fill-opacity="0.85" stroke="#5aa6c4" stroke-width="0.7"/><text x="1577.5" y="42" font-family="Liberation Serif" font-size="10" fill="#1b5aa8">R</text><path d="M1687.5 38.2h6l-3 3.4z" fill="#e8e8e8"/><path d="M21.9 63.8h7.699999999999999l4.5 4.5v10.7h-12.2z" fill="#e6e6e6"/><path d="M29.599999999999994 63.8v4.5h4.5" fill="#cfcfcf" stroke="#8c8c8c" stroke-width="0.6"/><circle cx="23.5" cy="70.8" r="4.4" fill="#3b6aa0"/><text x="21" y="73.8" font-family="Liberation Sans" font-size="7" font-weight="bold" fill="#fff">R</text><path d="M77.5 69.4L84.69999999999999 76.6M84.69999999999999 69.4L77.5 76.6" stroke="#7b858f" stroke-width="2"/><path d="M1033.7 81.3v-5q0-1.2 1.2-1.2h12.8q1.2 0 1.2 1.2v5z" fill="none" stroke="#8e979f" stroke-width="1.4"/><rect x="1033.7" y="75" width="14.6" height="2.8" fill="#8e979f"/><path d="M1053.7 81.3v-11.5q0-1.2 1.2-1.2h12q1.2 0 1.2 1.2v11.5z" fill="none" stroke="#8e979f" stroke-width="1.4"/><rect x="1053.7" y="68.7" width="14.2" height="2.6" fill="#8e979f"/><path d="M18.8 98l7-6.2v3.5h8.2v5.5h-8.2v3.5z" fill="#e2e2e2"/><path d="M53.2 98l-7-6.2v3.5h-8.2v5.5h8.2v3.5z" fill="#7b8691"/><rect x="75.5" y="92" width="11.5" height="11" rx="1.2" fill="#e6e6e6"/><rect x="75.5" y="92" width="11.5" height="3" rx="1" fill="#c6dbe8"/><path d="M71 102.5l5.5-5.5M73.5 96.5h3.5v3.5" stroke="#d8d8d8" stroke-width="1.6" fill="none"/><rect x="107" y="92" width="13" height="12" fill="#5e7590"/><rect x="109" y="92.5" width="9" height="5.04" fill="#7e858f"/><rect x="110" y="99.44" width="7" height="4.5600000000000005" fill="#7e858f"/><rect x="111" y="100.4" width="1.8" height="3.5999999999999996" fill="#5e7590"/><circle cx="145.6" cy="95.2" r="4.7" fill="#d2dfea" stroke="#8fa9bd" stroke-width="0.7"/><circle cx="144.6" cy="94.2" r="2" fill="#eef4f8"/><path d="M149 98.6l6.3 6" stroke="#9a5a28" stroke-width="2.8" stroke-linecap="round"/><path d="M148.7 98.3l1.2 1.2" stroke="#7fb0c8" stroke-width="2.6"/><path d="M167.6 103.3l10.6-10.4" stroke="#3d4247" stroke-width="2.4" stroke-linecap="round"/><path d="M168.5 102.6l9.2-9" stroke="#6a7076" stroke-width="0.8"/><path d="M167.4 103.5l1.5-1.5M178.4 92.7l-1.5 1.5" stroke="#5aaad8" stroke-width="2.6" stroke-linecap="round"/><path d="M178.60 89.40L178.60 86.60" stroke="#e8864e" stroke-width="1.3" stroke-linecap="round"/><path d="M180.86 90.34L182.84 88.36" stroke="#e8864e" stroke-width="1.3" stroke-linecap="round"/><path d="M181.80 92.60L184.60 92.60" stroke="#e8864e" stroke-width="1.3" stroke-linecap="round"/><path d="M180.86 94.86L182.84 96.84" stroke="#e8864e" stroke-width="1.3" stroke-linecap="round"/><path d="M178.60 96.20L178.60 98.80" stroke="#e8864e" stroke-width="1.3" stroke-linecap="round"/><path d="M176.34 90.34L174.36 88.36" stroke="#e8864e" stroke-width="1.3" stroke-linecap="round"/><path d="M172.6 91.2h2.6" stroke="#e8864e" stroke-width="1.3" stroke-linecap="round"/><path d="M191 97h6l-3 3.4z" fill="#e8e8e8"/><rect x="212.5" y="90" width="14.5" height="13.5" rx="1" fill="#ececec"/><path d="M214 93h12.5" stroke="#b8cfe0" stroke-width="0.8"/><path d="M214 95.8h12.5" stroke="#b8cfe0" stroke-width="0.8"/><path d="M214 98.6h12.5" stroke="#b8cfe0" stroke-width="0.8"/><path d="M214 101.2h12.5" stroke="#b8cfe0" stroke-width="0.8"/><path d="M212.5 91v12" stroke="#8a8a8a" stroke-width="1.4" stroke-dasharray="1 1"/><path d="M799 90.7l6 5.9h-3.8v7.3h-4.4v-7.3h-3.8z" fill="#e8e8e8"/><path d="M825 104.8l6-6.3h-3.9v-7.1h-4.5v7.1h-3.9z" fill="#e8e8e8"/><path d="M855.8 91.9l6.6 6.1-6.6 6.1z" fill="#0e9450"/><path d="M933.5 97h6l-3 3.4z" fill="#e8e8e8"/><circle cx="962" cy="97.5" r="2.3" fill="#1b8ad6"/><path d="M953 96.2h3q1-4.2 5.5-4.2q2.8 0 4 1.5M970.8 98.7h-3q-1 4.2-5.5 4.2q-2.8 0-4-1.5" fill="none" stroke="#1b8ad6" stroke-width="1.9" stroke-linecap="round"/><path d="M1027.5 97h6l-3 3.4z" fill="#e8e8e8"/><path d="M1055 91.5h9M1058 93.7h9M1058 96.1h9M1055 98.4h9M1058 100.6h9" stroke="#a7acb1" stroke-width="1.1"/><path d="M148 767.3l2.8-3.6 2.8 3.6z M148 769.3l2.8 3.6 2.8-3.6z" fill="#c7c3bd"/><path d="M147.8 768.3h6" stroke="#1d2126" stroke-width="0.9"/><path d="M1066 767.3l2.8-3.6 2.8 3.6z M1066 769.3l2.8 3.6 2.8-3.6z" fill="#c7c3bd"/><path d="M1065.8 768.3h6" stroke="#1d2126" stroke-width="0.9"/><path d="M145.20000000000002 793.0L152.4 800.2M152.4 793.0L145.20000000000002 800.2" stroke="#7b858f" stroke-width="2"/><path d="M277.4 793.0L284.6 800.2M284.6 793.0L277.4 800.2" stroke="#7b858f" stroke-width="2"/><path d="M1033.7 806.3v-5q0-1.2 1.2-1.2h12.8q1.2 0 1.2 1.2v5z" fill="none" stroke="#8e979f" stroke-width="1.4"/><rect x="1033.7" y="800" width="14.6" height="2.8" fill="#8e979f"/><path d="M1053.7 806.3v-11.5q0-1.2 1.2-1.2h12q1.2 0 1.2 1.2v11.5z" fill="none" stroke="#8e979f" stroke-width="1.4"/><rect x="1053.7" y="793.7" width="14.2" height="2.6" fill="#8e979f"/><ellipse cx="26.9" cy="820.5" rx="7.7" ry="5" fill="none" stroke="#dcdde0" stroke-width="3"/><text x="24.8" y="828.8" font-family="Liberation Sans" font-size="14.5" font-weight="700" fill="#1f80e2" stroke="#1f80e2" stroke-width="1.1">R</text><path d="M42.5 821h6l-3 3.4z" fill="#e8e8e8"/><path d="M136 826.5q1-6.5 7-6.8v-3.6l5.5 5.2-5.5 5.1v-3.4q-4.5 0-7 3.5z" fill="#c8ccd2"/><path d="M1072.2 813l-8 8.3" stroke="#cdd0d4" stroke-width="1.5" stroke-linecap="round"/><path d="M1052.8 827.5l6-4.6 2.8-2 3 1.8-2.6 6.1-5.1.3z" fill="#c6cacf"/><path d="M1647.7 81.3v-5q0-1.2 1.2-1.2h12.8q1.2 0 1.2 1.2v5z" fill="none" stroke="#8e979f" stroke-width="1.4"/><rect x="1647.7" y="75" width="14.6" height="2.8" fill="#8e979f"/><path d="M1667.7 81.3v-11.5q0-1.2 1.2-1.2h12q1.2 0 1.2 1.2v11.5z" fill="none" stroke="#8e979f" stroke-width="1.4"/><rect x="1667.7" y="68.7" width="14.2" height="2.6" fill="#8e979f"/><path d="M1097.5 92.7l1.5-1.5h4l1 1h5.5v11h-12z" fill="#e8e2c8" stroke="#b8923a" stroke-width="0.6"/><path d="M1099.0 94.2h9v8h-9z" fill="#f0f0f0"/><path d="M1095.5 97.2h11.5l3 7h-12z" fill="url(#fg)" stroke="#b8923a" stroke-width="0.6"/><g transform="translate(1105,92) scale(1.0)"><path d="M0 6.5q3-5 8-4.5v-2.5l4.5 4-4.5 4v-2.5q-4 0-8 1.5z" fill="#16a47c"/></g><rect x="1125" y="92" width="13" height="12.3" fill="#7aa5d0"/><rect x="1127" y="92.5" width="9" height="5.166" fill="#eeeeee"/><rect x="1128" y="99.626" width="7" height="4.674" fill="#f2f2f2"/><rect x="1129" y="100.61" width="1.8" height="3.69" fill="#7aa5d0"/><rect x="1156.4" y="91.3" width="13.8" height="12" fill="#8b9098"/><rect x="1156.4" y="91.3" width="13.8" height="2" fill="#b7bcc2"/><rect x="1157.2" y="94.2" width="3.6" height="2.5" fill="#ededed"/><rect x="1157.2" y="97.5" width="3.6" height="2.5" fill="#ededed"/><rect x="1157.2" y="100.6" width="3.6" height="2.5" fill="#ededed"/><rect x="1161.9" y="94.2" width="3.6" height="2.5" fill="#ededed"/><rect x="1161.9" y="97.5" width="3.6" height="2.5" fill="#ededed"/><rect x="1161.9" y="100.6" width="3.6" height="2.5" fill="#ededed"/><rect x="1166.5" y="94.2" width="3.6" height="2.5" fill="#ededed"/><rect x="1166.5" y="97.5" width="3.6" height="2.5" fill="#ededed"/><rect x="1166.5" y="100.6" width="3.6" height="2.5" fill="#ededed"/><g transform="translate(1164,92) scale(1.0)"><path d="M0 6.5q3-5 8-4.5v-2.5l4.5 4-4.5 4v-2.5q-4 0-8 1.5z" fill="#16a47c"/></g><path d="M1274.5 97h6l-3 3.4z" fill="#e8e8e8"/><circle cx="1304" cy="96.9" r="7" fill="#e6e6e6"/><path d="M1304 96.9V89.9A7 7 0 0 1 1306.6 103.4z" fill="#5aa898"/><circle cx="1304" cy="96.9" r="1.3" fill="#444"/><path d="M1371.5 97h6l-3 3.4z" fill="#e8e8e8"/><path d="M1410.8 88.5l-6.5 7.5" stroke="#c8473a" stroke-width="1.8" stroke-linecap="round"/><path d="M1394 101.5l8.5-7.2 3.6 2.6-4.5 7.5q-4 0-7.6-2.9z" fill="#c9b07a"/><path d="M1398.5 98.5l4.5 3M1400.5 96.7l4.2 3" stroke="#a85a3a" stroke-width="0.9"/><path d="M1591.3 92.3h12.7" stroke="#a2a9b0" stroke-width="1"/><path d="M1591.3 94.8h12.7" stroke="#a2a9b0" stroke-width="1"/><path d="M1591.3 97.3h12.7" stroke="#a2a9b0" stroke-width="1"/><path d="M1591.3 99.8h12.7" stroke="#a2a9b0" stroke-width="1"/><path d="M1591.3 102.4h12.7" stroke="#a2a9b0" stroke-width="1"/><path d="M1637.8 97h6l-3 3.4z" fill="#e8e8e8"/><path d="M1674.23 98.33 A5.6 5.6 0 1 1 1673.31 93.15" fill="none" stroke="#c3cad1" stroke-width="3.8"/><path d="M1670.10 96.20h6.6v-7z" fill="#c3cad1"/><path d="M1682 97.2h6l-3 3.4z" fill="#e8e8e8"/><path d="M1111.8 120h6l-3 3.4z" fill="#e8e8e8"/><rect x="1139.6" y="112.9" width="9.6" height="9.6" rx="1.2" fill="#b067b8"/><rect x="1143.2" y="119" width="9.6" height="9.7" rx="1.2" fill="#5b8ec8"/><rect x="1136.1" y="116.7" width="9.9" height="10.1" rx="1.2" fill="#9db780"/><path d="M1279 120.3h6l-3 3.4z" fill="#e8e8e8"/><circle cx="1562.4" cy="121.4" r="4.3" fill="none" stroke="#abb3bb" stroke-width="1.8"/><path d="M1565.6 124.6l5 4.5" stroke="#abb3bb" stroke-width="2.4" stroke-linecap="round"/><path d="M1647.7 449.3v-5q0-1.2 1.2-1.2h12.8q1.2 0 1.2 1.2v5z" fill="none" stroke="#8e979f" stroke-width="1.4"/><rect x="1647.7" y="443" width="14.6" height="2.8" fill="#8e979f"/><path d="M1667.7 449.3v-11.5q0-1.2 1.2-1.2h12q1.2 0 1.2 1.2v11.5z" fill="none" stroke="#8e979f" stroke-width="1.4"/><rect x="1667.7" y="436.7" width="14.2" height="2.6" fill="#8e979f"/><path d="M1104 461.5l2-2.5h8q1 0 1 1v3h-10z" fill="#dcdcdc" stroke="#b9a25a" stroke-width="0.5"/><rect x="1098" y="462" width="17" height="11.2" rx="0.8" fill="url(#fg)" stroke="#b8923a" stroke-width="0.6"/><circle cx="1100.3" cy="463.3" r="5.4" fill="#12925c"/><path d="M1097.0 463.3h6.6M1100.3 460.0v6.6" stroke="#fff" stroke-width="1.9"/><rect x="1209" y="459.2" width="12.7" height="14" fill="#e6e6e6"/><circle cx="1208.5" cy="463.3" r="5.4" fill="#12925c"/><path d="M1205.2 463.3h6.6M1208.5 460.0v6.6" stroke="#fff" stroke-width="1.9"/><path d="M1282.5 465h6l-3 3.4z" fill="#e8e8e8"/><rect x="1311" y="459.7" width="12.4" height="13.8" fill="#e6e6e6"/><circle cx="1310.3" cy="463.6" r="5.5" fill="#b01c1e"/><path d="M1308 461.3l4.6 4.6M1312.6 461.3l-4.6 4.6" stroke="#f0f0f0" stroke-width="1.8"/><rect x="1379.1" y="459.7" width="10.6" height="11.6" fill="#e6e6e6"/><rect x="1385.8" y="461.8" width="10.2" height="11.3" fill="#e2e2e2"/><path d="M1383.5 467.5h6.5v-2.6l4 3.6-4 3.6v-2.6h-6.5z" fill="#1a9ad6"/><polygon points="1485.95,464.14 1485.95,467.26 1483.35,467.68 1482.71,468.94 1484.70,470.29 1482.49,472.50 1480.35,470.96 1479.01,471.39 1479.46,473.75 1476.34,473.75 1475.92,471.15 1474.66,470.51 1473.31,472.50 1471.10,470.29 1472.64,468.15 1472.21,466.81 1469.85,467.26 1469.85,464.14 1472.45,463.72 1473.09,462.46 1471.10,461.11 1473.31,458.90 1475.45,460.44 1476.79,460.01 1476.34,457.65 1479.46,457.65 1479.88,460.25 1481.14,460.89 1482.49,458.90 1484.70,461.11 1483.16,463.25 1483.59,464.59" fill="url(#gear)" stroke="#1d6e90" stroke-width="0.5"/><circle cx="1477.9" cy="465.7" r="2" fill="#3d4a55"/><path d="M1527.7 465h6l-3 3.4z" fill="#e8e8e8"/><path d="M1683.73 466.33 A5.6 5.6 0 1 1 1682.81 461.15" fill="none" stroke="#c3cad1" stroke-width="3.8"/><path d="M1679.60 464.20h6.6v-7z" fill="#c3cad1"/><rect x="1094.5" y="482.2" width="13.2" height="13.2" rx="2.6" fill="#ffffff"/><path d="M1117 488.2v8.4h13.2v-8.4l-6.6-6z" fill="#ececec"/><rect x="1122" y="489" width="3.8" height="7.5" fill="#a8703e"/><path d="M1115.2 490.3l8.4-8.3 8.4 8.3" fill="none" stroke="#d81e1e" stroke-width="1.8"/><rect x="1677.3" y="492.2" width="2" height="2" fill="#fff"/><rect x="1681.3" y="492.2" width="2" height="2" fill="#fff"/><rect x="1685.3" y="492.2" width="2" height="2" fill="#fff"/><path d="M1154.6 513.4l5.2-6.6 5.2 6.6z" fill="#8a939b"/><path d="M350.2 482.2Q351.8 480.9 353.4 482.2Q355.0 483.5 356.6 482.2Q358.2 480.9 359.8 482.2Q361.4 483.5 363.0 482.2Q364.6 480.9 366.2 482.2Q367.8 483.5 369.4 482.2Q371.0 480.9 372.6 482.2Q374.2 483.5 375.8 482.2Q377.4 480.9 379.0 482.2Q380.6 483.5 382.2 482.2Q383.8 480.9 385.4 482.2Q387.0 483.5 388.6 482.2Q390.2 480.9 391.8 482.2Q393.4 483.5 395.0 482.2Q396.6 480.9 398.2 482.2Q399.8 483.5 401.4 482.2Q403.0 480.9 404.6 482.2Q406.2 483.5 407.8 482.2Q409.4 480.9 411.0 482.2Q412.6 483.5 414.2 482.2Q415.8 480.9 417.4 482.2Q419.0 483.5 420.6 482.2" fill="none" stroke="#c9a227" stroke-width="0.9"/><path d="M168.1 706.7Q169.7 705.4 171.3 706.7Q172.9 708.0 174.5 706.7Q176.1 705.4 177.7 706.7Q179.3 708.0 180.9 706.7Q182.5 705.4 184.1 706.7Q185.7 708.0 187.3 706.7Q188.9 705.4 190.5 706.7Q192.1 708.0 193.7 706.7Q195.3 705.4 196.9 706.7Q198.5 708.0 200.1 706.7Q201.7 705.4 203.3 706.7Q204.9 708.0 206.5 706.7Q208.1 705.4 209.7 706.7Q211.3 708.0 212.9 706.7Q214.5 705.4 216.1 706.7Q217.7 708.0 219.3 706.7Q220.9 705.4 222.5 706.7Q224.1 708.0 225.7 706.7" fill="none" stroke="#c9a227" stroke-width="0.9"/><path d="M1131 523.5h8.0l4.5 4.5v11.1h-12.5z" fill="#e6e6e6"/><path d="M1139.0 523.5v4.5h4.5" fill="#cfcfcf" stroke="#8c8c8c" stroke-width="0.6"/><circle cx="1132.8" cy="528.1999999999999" r="4" fill="#dadada" stroke="#9a9a9a" stroke-width="0.8"/><path d="M1132.6 525.8v2.6" stroke="#222" stroke-width="1"/><path d="M1131 548.1h8.0l4.5 4.5v11.1h-12.5z" fill="#e6e6e6"/><path d="M1139.0 548.1v4.5h4.5" fill="#cfcfcf" stroke="#8c8c8c" stroke-width="0.6"/><polygon points="1137.72,552.32 1137.72,554.08 1136.21,554.29 1135.85,554.99 1137.01,555.77 1135.77,557.01 1134.55,556.10 1133.81,556.34 1134.08,557.72 1132.32,557.72 1132.11,556.21 1131.41,555.85 1130.63,557.01 1129.39,555.77 1130.30,554.55 1130.06,553.81 1128.68,554.08 1128.68,552.32 1130.19,552.11 1130.55,551.41 1129.39,550.63 1130.63,549.39 1131.85,550.30 1132.59,550.06 1132.32,548.68 1134.08,548.68 1134.29,550.19 1134.99,550.55 1135.77,549.39 1137.01,550.63 1136.10,551.85 1136.34,552.59" fill="#5f7f96"/><circle cx="1133.2" cy="553.1999999999999" r="1.3" fill="#e6e6e6"/><path d="M1134 576.9l2-2.5h7q1 0 1 1v3h-10z" fill="#dcdcdc" stroke="#b9a25a" stroke-width="0.5"/><rect x="1128" y="577.4" width="16" height="11.2" rx="0.8" fill="url(#fg)" stroke="#b8923a" stroke-width="0.6"/><path d="M1134 601.4999999999999l2-2.5h7q1 0 1 1v3h-10z" fill="#dcdcdc" stroke="#b9a25a" stroke-width="0.5"/><rect x="1128" y="601.9999999999999" width="16" height="11.2" rx="0.8" fill="url(#fg)" stroke="#b8923a" stroke-width="0.6"/><path d="M1134 626.0999999999999l2-2.5h7q1 0 1 1v3h-10z" fill="#dcdcdc" stroke="#b9a25a" stroke-width="0.5"/><rect x="1128" y="626.5999999999999" width="16" height="11.2" rx="0.8" fill="url(#fg)" stroke="#b8923a" stroke-width="0.6"/><path d="M1134 650.6999999999999l2-2.5h7q1 0 1 1v3h-10z" fill="#dcdcdc" stroke="#b9a25a" stroke-width="0.5"/><rect x="1128" y="651.1999999999999" width="16" height="11.2" rx="0.8" fill="url(#fg)" stroke="#b8923a" stroke-width="0.6"/><path d="M1134 675.3l2-2.5h7q1 0 1 1v3h-10z" fill="#dcdcdc" stroke="#b9a25a" stroke-width="0.5"/><rect x="1128" y="675.8" width="16" height="11.2" rx="0.8" fill="url(#fg)" stroke="#b8923a" stroke-width="0.6"/><path d="M1134 699.9l2-2.5h7q1 0 1 1v3h-10z" fill="#dcdcdc" stroke="#b9a25a" stroke-width="0.5"/><rect x="1128" y="700.4" width="16" height="11.2" rx="0.8" fill="url(#fg)" stroke="#b8923a" stroke-width="0.6"/><path d="M1130.8 720.4999999999999h7.8l4.8 4.8v10.7h-12.6z" fill="#e6e6e6"/><path d="M1138.6 720.4999999999999v4.8h4.8" fill="#cfcfcf" stroke="#8c8c8c" stroke-width="0.6"/><path d="M1130.8 745.0999999999999h7.8l4.8 4.8v10.7h-12.6z" fill="#e6e6e6"/><path d="M1138.6 745.0999999999999v4.8h4.8" fill="#cfcfcf" stroke="#8c8c8c" stroke-width="0.6"/><path d="M1134 773.6999999999999l2-2.5h7q1 0 1 1v3h-10z" fill="#dcdcdc" stroke="#b9a25a" stroke-width="0.5"/><rect x="1128" y="774.1999999999999" width="16" height="11.2" rx="0.8" fill="url(#fg)" stroke="#b8923a" stroke-width="0.6"/><path d="M1134 798.3l2-2.5h7q1 0 1 1v3h-10z" fill="#dcdcdc" stroke="#b9a25a" stroke-width="0.5"/><rect x="1128" y="798.8" width="16" height="11.2" rx="0.8" fill="url(#fg)" stroke="#b8923a" stroke-width="0.6"/><path d="M1130.8 818.9h7.8l4.8 4.8v10.7h-12.6z" fill="#e6e6e6"/><path d="M1138.6 818.9v4.8h4.8" fill="#cfcfcf" stroke="#8c8c8c" stroke-width="0.6"/><path d="M1134 847.4999999999999l2-2.5h7q1 0 1 1v3h-10z" fill="#dcdcdc" stroke="#b9a25a" stroke-width="0.5"/><rect x="1128" y="847.9999999999999" width="16" height="11.2" rx="0.8" fill="url(#fg)" stroke="#b8923a" stroke-width="0.6"/><path d="M1131.4 868.3000000000001h8.9l4.5 4.5v11.7h-13.4z" fill="#e6e6e6"/><path d="M1140.3000000000002 868.3000000000001v4.5h4.5" fill="#cfcfcf" stroke="#8c8c8c" stroke-width="0.6"/><rect x="1128" y="870.0" width="10" height="4.5" fill="#cc2a36"/><path d="M1133 881.7q2-7 3-8q1 2-4 6q6-2 7-1" fill="none" stroke="#d8323a" stroke-width="0.7"/><path d="M1131.3 893.3h7.800000000000001l4.5 4.5v10.3h-12.3z" fill="#e6e6e6"/><path d="M1139.1 893.3v4.5h4.5" fill="#cfcfcf" stroke="#8c8c8c" stroke-width="0.6"/><circle cx="1133.3" cy="900.0999999999999" r="4.8" fill="#a3305a"/><path d="M1130.6 900.8h5.4" stroke="#e8c8d0" stroke-width="1.2"/><path d="M1134 921.3l2-2.5h7q1 0 1 1v3h-10z" fill="#dcdcdc" stroke="#b9a25a" stroke-width="0.5"/><rect x="1128" y="921.8" width="16" height="11.2" rx="0.8" fill="url(#fg)" stroke="#b8923a" stroke-width="0.6"/><path d="M1134 945.9l2-2.5h7q1 0 1 1v3h-10z" fill="#dcdcdc" stroke="#b9a25a" stroke-width="0.5"/><rect x="1128" y="946.4" width="16" height="11.2" rx="0.8" fill="url(#fg)" stroke="#b8923a" stroke-width="0.6"/><circle cx="1136" cy="950.2" r="2" fill="#6a5520"/><path d="M1132.8 955.5q0-3.5 3.2-3.5t3.2 3.5z" fill="#6a5520"/><path d="M1134 970.4999999999999l2-2.5h7q1 0 1 1v3h-10z" fill="#dcdcdc" stroke="#b9a25a" stroke-width="0.5"/><rect x="1128" y="970.9999999999999" width="16" height="11.2" rx="0.8" fill="url(#fg)" stroke="#b8923a" stroke-width="0.6"/><path d="M1134 995.1l2-2.5h7q1 0 1 1v3h-10z" fill="#dcdcdc" stroke="#b9a25a" stroke-width="0.5"/><rect x="1128" y="995.6" width="16" height="11.2" rx="0.8" fill="url(#fg)" stroke="#b8923a" stroke-width="0.6"/></svg>
<div class="a" style="left:843.5px;top:78.5px;width:104px;height:36px;border:3px solid #ffffff;border-radius:18px;box-sizing:border-box"></div>
<svg class="a" style="left:850px;top:110px;" width="60" height="70" viewBox="0 0 60 70"><path d="M16.3 61 L37.5 26" stroke="#fff" stroke-width="3.2" stroke-linecap="butt"/><path d="M45.7 12.3 L30.3 22.3 L44.3 30.7 Z" fill="#fff"/></svg>
</body></html>
